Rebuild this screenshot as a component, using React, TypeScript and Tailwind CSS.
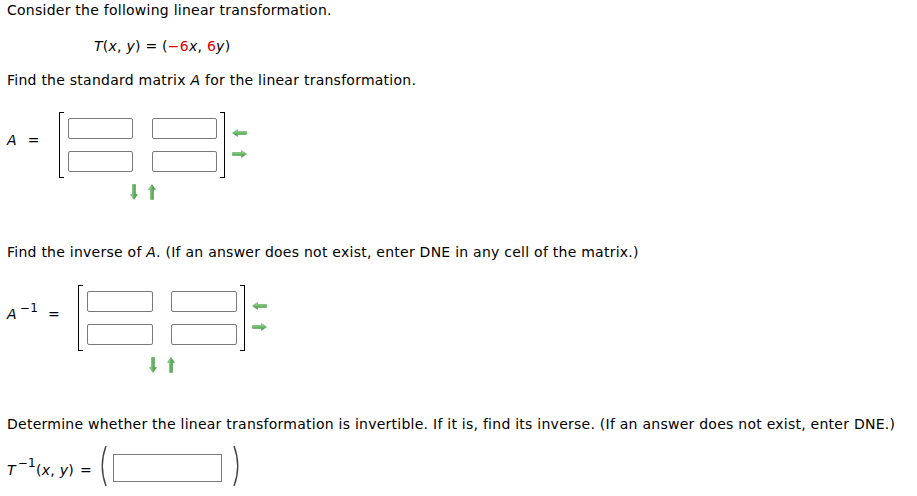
import React from "react";

const font = { fontFamily: '"DejaVu Sans", Verdana, sans-serif' };

function HArrow({ dir }: { dir: "left" | "right" }) {
  const id = `g-${dir}`;
  const d =
    dir === "left"
      ? "M0.5 4 L5.5 0.5 L5.5 2.5 L14.5 2.5 L14.5 5.5 L5.5 5.5 L5.5 7.5 Z"
      : "M14.5 4 L9.5 0.5 L9.5 2.5 L0.5 2.5 L0.5 5.5 L9.5 5.5 L9.5 7.5 Z";
  return (
    <svg width="15" height="8" viewBox="0 0 15 8" className="block">
      <defs>
        <linearGradient id={id} x1="0" y1="0" x2="0" y2="1">
          <stop offset="0" stopColor="#b5e0b0" />
          <stop offset="0.5" stopColor="#6dbb68" />
          <stop offset="1" stopColor="#2f8a34" />
        </linearGradient>
      </defs>
      <path d={d} fill={`url(#${id})`} stroke="#4a9a4a" strokeWidth="0.5" />
    </svg>
  );
}

function VArrow({ dir }: { dir: "up" | "down" }) {
  const id = `g-${dir}`;
  const d =
    dir === "down"
      ? "M4 15.5 L0.5 10.5 L2.5 10.5 L2.5 0.5 L5.5 0.5 L5.5 10.5 L7.5 10.5 Z"
      : "M4 0.5 L0.5 5.5 L2.5 5.5 L2.5 15.5 L5.5 15.5 L5.5 5.5 L7.5 5.5 Z";
  return (
    <svg width="8" height="16" viewBox="0 0 8 16" className="block">
      <defs>
        <linearGradient id={id} x1="0" y1="0" x2="1" y2="0">
          <stop offset="0" stopColor="#b5e0b0" />
          <stop offset="0.5" stopColor="#5fb35c" />
          <stop offset="1" stopColor="#2f8a34" />
        </linearGradient>
      </defs>
      <path d={d} fill={`url(#${id})`} stroke="#4a9a4a" strokeWidth="0.5" />
    </svg>
  );
}

function Cell({ w }: { w: string }) {
  return (
    <div className={`${w} h-[21px] border border-[#7a7a7a] rounded-[2px] bg-white`} />
  );
}

function MatrixBlock({ cellW, gapX }: { cellW: string; gapX: string }) {
  return (
    <div className="flex items-center">
      <div className="flex h-[66px]">
        <div className="w-[5px] border-l border-t border-b border-black" />
        <div className="flex flex-col gap-[12px] py-[6px] pl-[4px] pr-[3px]">
          <div className={`flex ${gapX}`}>
            <Cell w={cellW} />
            <Cell w={cellW} />
          </div>
          <div className={`flex ${gapX}`}>
            <Cell w={cellW} />
            <Cell w={cellW} />
          </div>
        </div>
        <div className="w-[5px] border-r border-t border-b border-black" />
      </div>
      <div className="flex flex-col gap-[13px] ml-[7px] mt-[-4px]">
        <HArrow dir="left" />
        <HArrow dir="right" />
      </div>
    </div>
  );
}

export default function App() {
  return (
    <div
      className="w-[917px] h-[496px] bg-white text-black text-[14px] tracking-[0.25px] pl-[7px] overflow-hidden"
      style={font}
    >
      <div className="h-[20px] leading-[20px]">
        Consider the following linear transformation.
      </div>
      <div className="mt-[16px] h-[20px] leading-[20px] pl-[87px]">
        <i>T</i>(<i>x</i>, <i>y</i>) = (<span className="text-[#e00000]">−6</span>
        <i>x</i>, <span className="text-[#e00000]">6</span>
        <i>y</i>)
      </div>
      <div className="mt-[14px] h-[20px] leading-[20px]">
        Find the standard matrix <i>A</i> for the linear transformation.
      </div>

      <div className="mt-[22px] flex items-start">
        <div className="w-[52px] h-[66px] flex items-center pb-[10px]">
          <i>A</i>
          <span className="ml-[11px]">=</span>
        </div>
        <div className="flex flex-col items-start">
          <MatrixBlock cellW="w-[65px]" gapX="gap-[19px]" />
          <div className="w-[167px] flex justify-center gap-[10px] mt-[6px]">
            <VArrow dir="down" />
            <VArrow dir="up" />
          </div>
        </div>
      </div>

      <div className="mt-[42px] h-[20px] leading-[20px]">
        Find the inverse of <i>A</i>. (If an answer does not exist, enter DNE in any
        cell of the matrix.)
      </div>

      <div className="mt-[23px] flex items-start">
        <div className="w-[71px] h-[66px] pt-[17px] flex items-start">
          <i className="leading-[16px] mt-[4px]">A</i>
          <span className="text-[12px] leading-[12px] ml-[3px]">−1</span>
          <span className="leading-[16px] mt-[4px] ml-[10px]">=</span>
        </div>
        <div className="flex flex-col items-start">
          <MatrixBlock cellW="w-[66px]" gapX="gap-[18px]" />
          <div className="w-[168px] flex justify-center gap-[10px] mt-[6px]">
            <VArrow dir="down" />
            <VArrow dir="up" />
          </div>
        </div>
      </div>

      <div className="mt-[41px] h-[20px] leading-[20px]">
        Determine whether the linear transformation is invertible. If it is, find
        its inverse. (If an answer does not exist, enter DNE.)
      </div>

      <div className="mt-[11px] flex items-center h-[42px]">
        <div className="w-[91px] flex items-start pt-[2px]">
          <i className="leading-[16px] mt-[5px]">T</i>
          <span className="text-[12px] leading-[12px] ml-[2px]">−1</span>
          <span className="leading-[16px] mt-[5px]">
            (<i>x</i>, <i>y</i>)
          </span>
          <span className="leading-[16px] mt-[5px] ml-[6px]">=</span>
        </div>
        <svg width="10" height="42" viewBox="0 0 10 42">
          <path d="M8 1 Q0.5 21 8 41" fill="none" stroke="#444" strokeWidth="1.4" />
        </svg>
        <div className="ml-[5px] mt-[4px] w-[109px] h-[28px] border border-[#7a7a7a] bg-white" />
        <svg width="10" height="42" viewBox="0 0 10 42" className="ml-[10px]">
          <path d="M2 1 Q9.5 21 2 41" fill="none" stroke="#444" strokeWidth="1.4" />
        </svg>
      </div>
    </div>
  );
}
